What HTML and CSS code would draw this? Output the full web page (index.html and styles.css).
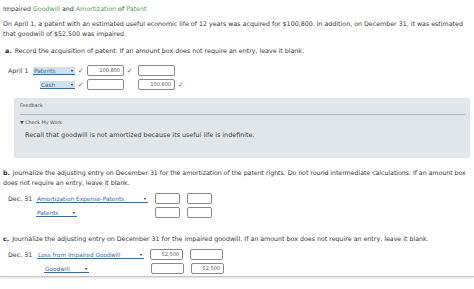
FILE: index.html
```html
<!DOCTYPE html>
<html>
<head>
<meta charset="utf-8">
<link rel="stylesheet" href="styles.css">
</head>
<body>
<div class="card">
  <div class="title">Impaired <span class="kw">Goodwill</span> and <span class="kw">Amortization</span> of <span class="kw">Patent</span></div>
  <p class="para">On April 1, a patent with an estimated useful economic life of 12 years was acquired for $100,800. In addition, on December 31, it was estimated that goodwill of $52,500 was impaired.</p>

  <p class="q qa"><b>a.</b> Record the acquisition of patent. If an amount box does not require an entry, leave it blank.</p>
  <div class="journal ja">
    <div class="row">
      <span class="date">April 1</span>
      <span class="sel sel-hl w-pat">Patents<i class="arr"></i></span>
      <span class="chk">✓</span>
      <span class="box wa">100,800</span>
      <span class="chk">✓</span>
      <span class="box wa gap2"></span>
    </div>
    <div class="row">
      <span class="date"></span>
      <span class="sel sel-hl w-cash">Cash<i class="arr"></i></span>
      <span class="chk">✓</span>
      <span class="box wa"></span>
      <span class="chk hide">✓</span>
      <span class="box wa gap2">100,800</span>
      <span class="chk">✓</span>
    </div>
  </div>

  <div class="feedback">
    <div class="fb-head">Feedback</div>
    <div class="fb-rule"></div>
    <div class="fb-toggle">▼ Check My Work</div>
    <div class="fb-text">Recall that goodwill is not amortized because its useful life is indefinite.</div>
  </div>

  <p class="q qb"><b>b.</b> Journalize the adjusting entry on December 31 for the amortization of the patent rights. Do not round intermediate calculations. If an amount box does not require an entry, leave it blank.</p>
  <div class="journal jb">
    <div class="row">
      <span class="date">Dec. 31</span>
      <span class="sel w-amort">Amortization Expense-Patents<i class="arr"></i></span>
      <span class="box wb"></span>
      <span class="box wb"></span>
    </div>
    <div class="row">
      <span class="date"></span>
      <span class="sel w-pat2">Patents<i class="arr"></i></span>
      <span class="spacer-b"></span>
      <span class="box wb"></span>
      <span class="box wb"></span>
    </div>
  </div>

  <p class="q qc"><b>c.</b> Journalize the adjusting entry on December 31 for the impaired goodwill. If an amount box does not require an entry, leave it blank.</p>
  <div class="journal jc">
    <div class="row">
      <span class="date">Dec. 31</span>
      <span class="sel w-loss">Loss from Impaired Goodwill<i class="arr"></i></span>
      <span class="box wc">52,500</span>
      <span class="box wc"></span>
    </div>
    <div class="row">
      <span class="date"></span>
      <span class="sel w-gw">Goodwill<i class="arr"></i></span>
      <span class="spacer-c"></span>
      <span class="box wc"></span>
      <span class="box wc">52,500</span>
    </div>
  </div>
</div>
<div class="footer">
  <span class="fbtn"></span>
  <span class="fmark m1"></span>
  <span class="fmark m2"></span>
</div>
</body>
</html>
```

FILE: styles.css
```css
html, body {
  margin: 0;
  padding: 0;
  background: #ffffff;
}
body {
  width: 474px;
  height: 289px;
  overflow: hidden;
  font-family: "DejaVu Sans", Verdana, sans-serif;
  font-size: 6.3px;
  color: #383838;
}
.card {
  padding: 4px 1px 0 3px;
  height: 272px;
  border-bottom: 1px solid #c4c4c4;
  box-shadow: 0 1px 2px rgba(0,0,0,0.12);
}
.title {
  line-height: 10px;
}
.kw {
  color: #4f9a56;
}
.para {
  margin: 5px 2px 0 0;
  line-height: 10px;
}
.q {
  margin: 0;
  line-height: 10px;
}
.q b {
  color: #2a2a2a;
  margin-right: 1px;
}
.qa {
  margin-top: 7px;
  padding-left: 2px;
}
.journal {
  display: flex;
  flex-direction: column;
  gap: 3px;
  padding-left: 5px;
}
.ja { margin-top: 9px; }
.row {
  display: flex;
  align-items: center;
  height: 11px;
}
.date {
  width: 25px;
  flex: none;
}
.sel {
  position: relative;
  display: inline-block;
  height: 8px;
  line-height: 8px;
  color: #3a6a9c;
  border-bottom: 1px solid #3a6a9c;
  padding-left: 1px;
  box-sizing: border-box;
  font-size: 5.8px;
  flex: none;
}
.sel-hl {
  background: #d3dfed;
}
.arr {
  position: absolute;
  right: 2px;
  top: 3px;
  width: 0;
  height: 0;
  border-left: 1.5px solid transparent;
  border-right: 1.5px solid transparent;
  border-top: 2px solid #222;
}
.w-pat { width: 42px; }
.w-cash { width: 35px; margin-left: 7px; }
.chk {
  color: #3d8f3d;
  font-size: 7.5px;
  width: 12px;
  text-align: center;
  flex: none;
}
.hide { visibility: hidden; }
.box {
  height: 11px;
  box-sizing: border-box;
  border: 1px solid #8a8a8a;
  border-radius: 2px;
  background: #fff;
  font-size: 5px;
  line-height: 9px;
  text-align: right;
  padding-right: 3px;
  color: #555;
  flex: none;
}
.wa { width: 37px; }
.gap2 { margin-left: 2px; }

.feedback {
  margin: 8px 3px 0 11px;
  height: 60px;
  box-sizing: border-box;
  background: #e1e6ea;
  border-radius: 2px;
  padding: 5px 5px 0 6px;
}
.fb-head {
  font-size: 4.8px;
  line-height: 6px;
  color: #505050;
}
.fb-rule {
  margin-top: 5px;
  height: 1px;
  background: #b3babf;
}
.fb-toggle {
  margin-top: 5px;
  font-size: 4.8px;
  line-height: 6px;
  color: #505050;
}
.fb-text {
  margin-top: 4px;
  padding-left: 5px;
  font-size: 6.4px;
  line-height: 10px;
  color: #3c3c3c;
}

.qb { margin-top: 10px; letter-spacing: -0.05px; }
.jb { margin-top: 5px; gap: 3px; }
.w-amort { width: 112px; margin-left: 3px; margin-right: 7px; }
.w-pat2 { width: 41px; margin-left: 3px; }
.spacer-b { width: 78px; flex: none; }
.wb { width: 25px; margin-right: 7px; }

.qc { margin-top: 16px; }
.jc { margin-top: 5px; }
.w-loss { width: 107px; margin-left: 4px; margin-right: 6px; }
.w-gw { width: 45px; margin-left: 11px; }
.spacer-c { width: 62px; flex: none; }
.wc { width: 33px; margin-right: 7px; }

.footer {
  display: flex;
  align-items: flex-end;
  height: 16px;
}
.fbtn {
  width: 44px;
  height: 2px;
  background: #6f93b8;
}
.fmark {
  width: 2px;
  height: 2px;
  background: #3d4a58;
}
.m1 { margin-left: 348px; }
.m2 { margin-left: 71px; }
```
